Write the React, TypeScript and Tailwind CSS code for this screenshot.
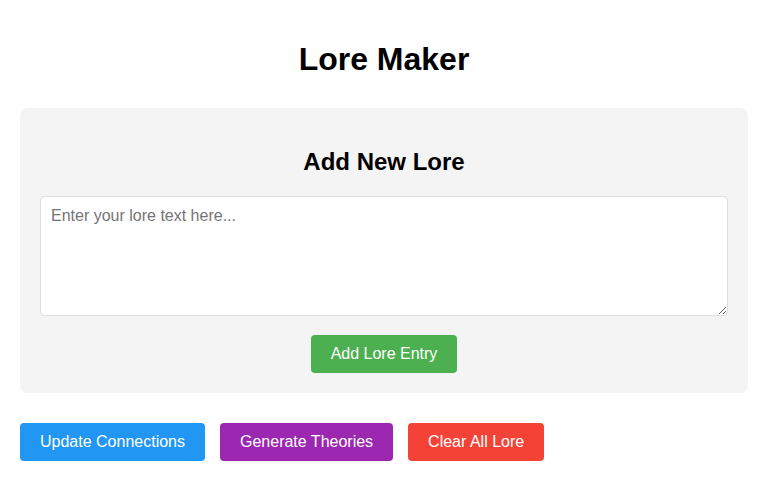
import React, {useState} from 'react';

export default function App() {
    const [text, setText] = useState('');

    return (
        <div className="min-h-[480px] bg-white px-5 pb-5 font-['Liberation_Sans',Arial,sans-serif] text-black">
            <h1 className="pt-[41px] mb-[30px] text-center text-[32px] font-bold leading-[37px]">Lore Maker</h1>

            <div className="rounded-lg bg-[#f4f4f4] p-5">
                <h2 className="mt-5 mb-5 text-center text-[24px] font-bold leading-[28px]">Add New Lore</h2>
                <textarea
                    value={text}
                    onChange={(e) => setText(e.target.value)}
                    placeholder="Enter your lore text here..."
                    className="block h-[120px] w-full rounded border border-[#ddd] bg-white p-2.5 text-base leading-[18px] placeholder:text-[#757575]"
                />
                <div className="mt-[19px] flex justify-center">
                    <button className="h-[38px] rounded bg-[#4CAF50] px-5 text-base text-white">Add Lore Entry</button>
                </div>
            </div>

            <div className="mt-[30px] flex gap-[15px]">
                <button className="h-[38px] rounded bg-[#2196F3] px-5 text-base text-white">Update Connections</button>
                <button className="h-[38px] rounded bg-[#9C27B0] px-5 text-base text-white">Generate Theories</button>
                <button className="h-[38px] rounded bg-[#f44336] px-5 text-base text-white">Clear All Lore</button>
            </div>
        </div>
    );
}
